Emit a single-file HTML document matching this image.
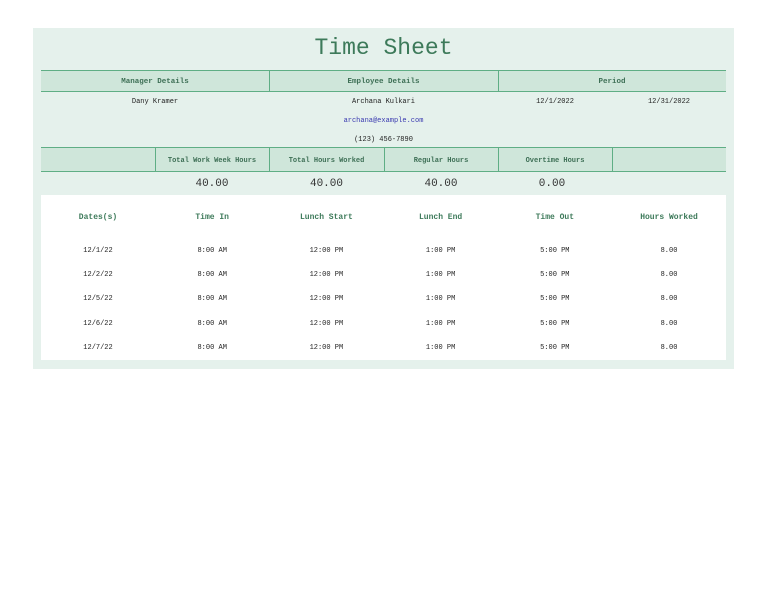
<!DOCTYPE html>
<html><head><style>
*{margin:0;padding:0;box-sizing:border-box}
body{width:768px;height:594px;background:#fff;font-family:"Liberation Mono",monospace;position:relative}
.panel{position:absolute;left:33px;top:28px;width:701px;height:341px;background:#e5f1ec}
.t{position:absolute;text-align:center;white-space:nowrap}
.hdr{position:absolute;background:#cfe6da;border-top:1px solid #5fae85;border-bottom:1px solid #5fae85}
.vl{position:absolute;width:1px;background:#5fae85}
.h{font-size:7.5px;font-weight:bold;color:#3d6f55}
.b{font-size:7px;color:#222}
.g{font-size:8px;font-weight:bold;color:#3d7a5a}
.white{position:absolute;left:41px;top:195px;width:685px;height:165px;background:#fff}
</style></head><body>
<div class="panel"></div>
<div class="t" style="left:33px;width:701px;top:35px;font-size:23px;color:#3d7a5a">Time Sheet</div>
<div class="hdr" style="left:41px;top:70px;width:685px;height:22px"></div>
<div class="vl" style="left:269px;top:70px;height:22px"></div>
<div class="vl" style="left:498px;top:70px;height:22px"></div>
<div class="t h" style="left:41px;width:228px;top:78px">Manager Details</div>
<div class="t h" style="left:269px;width:229px;top:78px">Employee Details</div>
<div class="t h" style="left:498px;width:228px;top:78px">Period</div>
<div class="t b" style="left:41px;width:228px;top:98px">Dany Kramer</div>
<div class="t b" style="left:269px;width:229px;top:98px">Archana Kulkari</div>
<div class="t b" style="left:498px;width:114px;top:98px">12/1/2022</div>
<div class="t b" style="left:612px;width:114px;top:98px">12/31/2022</div>
<div class="t b" style="left:269px;width:229px;top:117px;color:#3a3ab0">archana@example.com</div>
<div class="t b" style="left:269px;width:229px;top:136px">(123) 456-7890</div>
<div class="hdr" style="left:41px;top:147px;width:685px;height:25px"></div>
<div class="vl" style="left:155px;top:147px;height:25px"></div>
<div class="vl" style="left:269px;top:147px;height:25px"></div>
<div class="vl" style="left:384px;top:147px;height:25px"></div>
<div class="vl" style="left:498px;top:147px;height:25px"></div>
<div class="vl" style="left:612px;top:147px;height:25px"></div>
<div class="t h" style="left:155px;width:114px;top:157px;font-size:7px">Total Work Week Hours</div>
<div class="t h" style="left:269px;width:115px;top:157px;font-size:7px">Total Hours Worked</div>
<div class="t h" style="left:384px;width:114px;top:157px;font-size:7px">Regular Hours</div>
<div class="t h" style="left:498px;width:114px;top:157px;font-size:7px">Overtime Hours</div>
<div class="t" style="left:155px;width:114px;top:178px;font-size:11px;color:#333">40.00</div>
<div class="t" style="left:269px;width:115px;top:178px;font-size:11px;color:#333">40.00</div>
<div class="t" style="left:384px;width:114px;top:178px;font-size:11px;color:#333">40.00</div>
<div class="t" style="left:498px;width:108px;top:178px;font-size:11px;color:#333">0.00</div>
<div class="white"></div>
<div id="grid"></div>
<script>
var cols=["Dates(s)","Time In","Lunch Start","Lunch End","Time Out","Hours Worked"];
var dates=["12/1/22","12/2/22","12/5/22","12/6/22","12/7/22"];
var ys=[247,271,295,320,344];
var h="";
for(var c=0;c<6;c++){var l=41+c*114.2;
h+='<div class="t g" style="left:'+l+'px;width:114px;top:213px">'+cols[c]+'</div>';
for(var r=0;r<5;r++){var v=[dates[r],"8:00 AM","12:00 PM","1:00 PM","5:00 PM","8.00"][c];
h+='<div class="t b" style="left:'+l+'px;width:114px;top:'+ys[r]+'px">'+v+'</div>';}}
document.getElementById("grid").innerHTML=h;
</script>
</body></html>
